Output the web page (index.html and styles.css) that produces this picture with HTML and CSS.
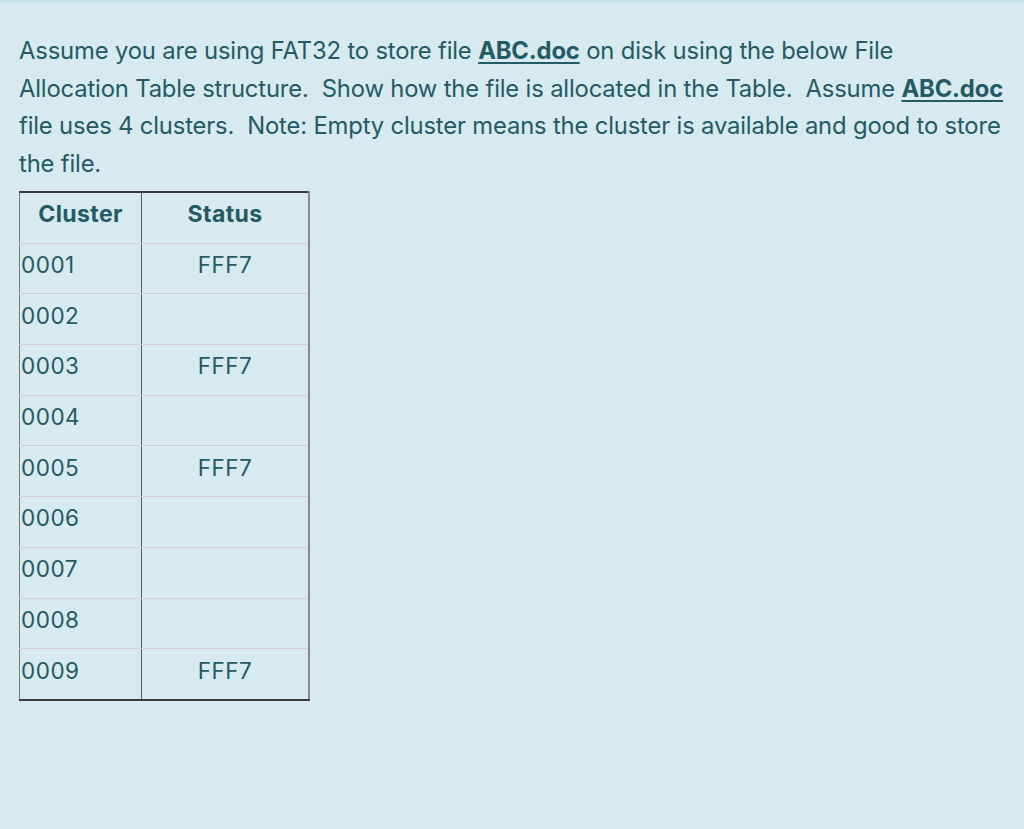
FILE: index.html
```html
<!DOCTYPE html>
<html>
<head>
<meta charset="utf-8">
<link rel="stylesheet" href="styles.css">
</head>
<body>
<div class="topline"></div>
<main class="content">
  <p class="question">Assume you are using FAT32 to store file <b class="u">ABC.doc</b> on disk using the below File Allocation Table structure.&nbsp; Show how the file is allocated in the Table.&nbsp; Assume <b class="u">ABC.doc</b> file uses 4 clusters.&nbsp; Note: Empty cluster means the cluster is available and good to store the file.</p>
  <table class="fat">
    <thead>
      <tr><th class="c1">Cluster</th><th class="c2">Status</th></tr>
    </thead>
    <tbody>
      <tr><td class="c1">0001</td><td class="c2">FFF7</td></tr>
      <tr><td class="c1">0002</td><td class="c2"></td></tr>
      <tr><td class="c1">0003</td><td class="c2">FFF7</td></tr>
      <tr><td class="c1">0004</td><td class="c2"></td></tr>
      <tr><td class="c1">0005</td><td class="c2">FFF7</td></tr>
      <tr><td class="c1">0006</td><td class="c2"></td></tr>
      <tr><td class="c1">0007</td><td class="c2"></td></tr>
      <tr><td class="c1">0008</td><td class="c2"></td></tr>
      <tr><td class="c1">0009</td><td class="c2">FFF7</td></tr>
    </tbody>
  </table>
</main>
</body>
</html>
```
FILE: styles.css
```css
html, body {
  margin: 0;
  padding: 0;
  background: #d6eaef;
  height: 100%;
}
body {
  font-family: Inter, "Noto Sans", sans-serif;
  color: #245a64;
}
.topline {
  height: 3px;
  background: #c8e2e9;
}
.content {
  padding: 29px 19px 0 19px;
}
.question {
  margin: 0;
  font-size: 23.8px;
  line-height: 37.5px;
  width: 990px;
  letter-spacing: -0.16px;
}
.u {
  text-decoration: underline;
  text-decoration-thickness: 2px;
  text-underline-offset: 3px;
}
.fat {
  margin-top: 9px;
  border-collapse: collapse;
  font-size: 22.5px;
  border-top: 2px solid #3a3a3a;
  border-bottom: 2px solid #3a3a3a;
  border-left: 1px solid #7a7a7a;
  border-right: 2px solid #8a8a8a;
}
.fat th, .fat td {
  padding: 0 0 8px 0;
  height: 41.7px;
  border-bottom: 1px solid #d4cfcf;
  letter-spacing: 0.5px;
}
.fat tr:last-child td { border-bottom: none; }
.fat th {
  font-size: 23px;
  font-weight: 700;
  text-align: center;
  letter-spacing: 0.4px;
}
.fat .c1 {
  width: 120px;
  border-right: 1px solid #5a5a5a;
}
.fat td.c1 { text-align: left; padding-left: 1px; }
.fat .c2 {
  width: 166px;
  text-align: center;
}
```
